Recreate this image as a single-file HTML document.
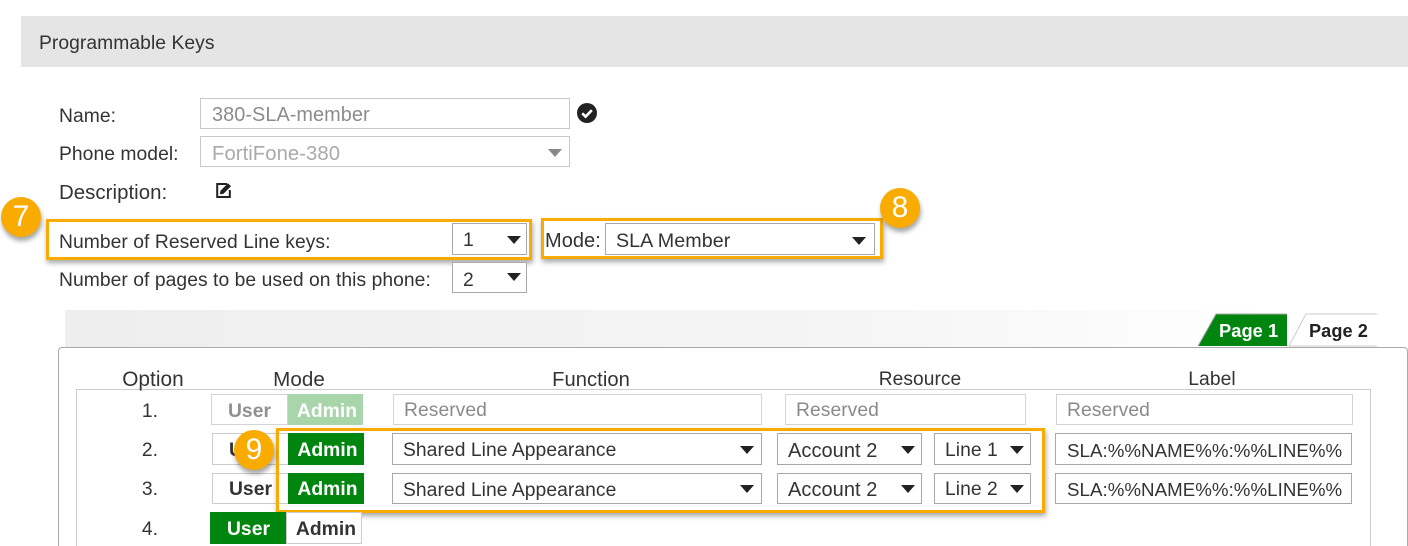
<!DOCTYPE html>
<html><head><meta charset="utf-8"><style>
html,body{margin:0;padding:0;background:#fff}
#p{position:relative;width:1408px;height:546px;overflow:hidden;background:#fff;font-family:"Liberation Sans",sans-serif;color:#333;font-size:19.3px;letter-spacing:.05px}
#p div{position:absolute;box-sizing:border-box}
.t{white-space:nowrap;height:24px;line-height:24px}
.c{text-align:center}
.b{border:1px solid #a8a8a8;background:#fff;white-space:nowrap;padding-left:10px}
.l{border:1px solid #d4d4d4;background:#fff;color:#8a8a8a;white-space:nowrap;padding-left:10px}
.a{width:0;height:0;border-left:7px solid transparent;border-right:7px solid transparent;border-top:8px solid #222}
.g{background:#00860f;color:#fff;font-weight:bold;text-align:center}
.o{border:3px solid #f9ab00;box-shadow:1px 3px 5px rgba(0,0,0,.35)}
.n{width:40px;height:40px;border-radius:50%;background:#f9ab00;color:#fff;text-align:center;font-size:30px;line-height:40px;box-shadow:1px 4px 5px rgba(0,0,0,.35)}
</style></head><body><div id="p">
<div style="left:21px;top:16px;width:1387px;height:51px;background:#e5e5e5"></div>
<div class="t" style="left:39px;top:32px">Programmable Keys</div>

<div class="t" style="left:59px;top:105px">Name:</div>
<div class="l" style="left:200px;top:98px;width:370px;height:31px;line-height:32px;border-color:#c8c8c8;color:#8c8c8c;padding-left:11px;font-size:19.9px">380-SLA-member</div>
<svg style="position:absolute;left:577px;top:103px" width="20" height="20" viewBox="0 0 20 20"><circle cx="10" cy="10" r="10" fill="#222"/><path d="M5.2 10.3l3.4 3.3 6.2-6.4" fill="none" stroke="#fff" stroke-width="2.6"/></svg>

<div class="t" style="left:59px;top:143px">Phone model:</div>
<div class="l" style="left:200px;top:136px;width:370px;height:31px;line-height:34px;border-color:#c8c8c8;color:#aaa;padding-left:11px;font-size:20.3px">FortiFone-380</div>
<div class="a" style="left:548px;top:149px;border-top-color:#888"></div>

<div class="t" style="left:59px;top:181px;font-size:20.4px">Description:</div>
<svg style="position:absolute;left:215px;top:181px" width="18" height="18" viewBox="0 0 18 18"><path d="M12 3H2.2v13h12.6V9" fill="none" stroke="#222" stroke-width="2"/><path d="M5.5 9.8L13 2.2l3 3-7.5 7.6-3.6.6z" fill="#222"/></svg>

<div class="o" style="left:46px;top:219px;width:486px;height:41px"></div>
<div class="t" style="left:59px;top:231px">Number of Reserved Line keys:</div>
<div class="b" style="left:452px;top:223px;width:75px;height:32px;line-height:34px">1</div>
<div class="a" style="left:507px;top:236px"></div>
<div class="n" style="left:1px;top:197px">7</div>

<div class="o" style="left:541px;top:218px;width:342px;height:41px"></div>
<div class="t" style="left:545px;top:229px;font-size:20px">Mode:</div>
<div class="b" style="left:605px;top:223px;width:270px;height:32px;line-height:34px;font-size:19.7px">SLA Member</div>
<div class="a" style="left:852px;top:237px"></div>
<div class="n" style="left:880px;top:188px">8</div>

<div class="t" style="left:59px;top:269px">Number of pages to be used on this phone:</div>
<div class="b" style="left:452px;top:262px;width:75px;height:31px;line-height:35px">2</div>
<div class="a" style="left:507px;top:273px"></div>

<div style="left:65px;top:310px;width:1312px;height:37px;background:linear-gradient(90deg,#eeeeee,#f5f5f5 60%,#fff 92%)"></div>
<svg style="position:absolute;left:1190px;top:310px" width="190" height="40" viewBox="0 0 190 40"><path d="M8 36L26 4h71v32z" fill="#00860f"/><path d="M8 36L26 4h71" fill="none" stroke="#aaa"/><path d="M99 37h88V4h-71z" fill="#fff"/><path d="M187 36H99L116 4h71" fill="none" stroke="#ccc"/></svg>
<div class="t" style="left:1219px;top:319px;color:#fff;font-weight:bold;font-size:18.3px">Page 1</div>
<div class="t" style="left:1309px;top:319px;font-weight:bold;color:#222;font-size:18.2px">Page 2</div>

<div style="left:58px;top:347px;width:1350px;height:210px;border:1px solid #aaa;border-radius:4px;background:#fff"></div>
<div style="left:76px;top:389px;width:1295px;height:170px;border:1px solid #ccc"></div>
<div class="t c" style="left:93px;top:368px;width:120px;font-size:20.8px">Option</div>
<div class="t c" style="left:239px;top:368px;width:120px;font-size:20.6px">Mode</div>
<div class="t c" style="left:531px;top:368px;width:120px;font-size:20.2px">Function</div>
<div class="t c" style="left:860px;top:368px;width:120px;font-size:19.2px">Resource</div>
<div class="t c" style="left:1152px;top:368px;width:120px">Label</div>

<div class="t c" style="left:130px;top:400px;width:40px">1.</div>
<div class="t c" style="left:130px;top:439px;width:40px">2.</div>
<div class="t c" style="left:130px;top:478px;width:40px">3.</div>
<div class="t c" style="left:130px;top:518px;width:40px">4.</div>

<div class="l c" style="left:211px;top:394px;width:77px;height:31px;line-height:33px;padding:0;font-weight:bold;color:#909090">User</div>
<div class="g" style="left:288px;top:394px;width:75px;height:31px;line-height:36px;background:#a8d6aa;padding-left:3px">Admin</div>
<div class="l" style="left:393px;top:394px;width:369px;height:31px;line-height:32px">Reserved</div>
<div class="l" style="left:785px;top:394px;width:241px;height:31px;line-height:32px">Reserved</div>
<div class="l" style="left:1056px;top:394px;width:297px;height:31px;line-height:32px">Reserved</div>

<div class="b" style="left:212px;top:433px;width:77px;height:32px;line-height:33px;padding:0;border-color:#ccc;text-align:center;font-weight:bold">User</div>
<div class="g" style="left:288px;top:433px;width:76px;height:32px;line-height:36px;padding-left:3px">Admin</div>
<div class="b" style="left:392px;top:433px;width:370px;height:32px;line-height:34px">Shared Line Appearance</div>
<div class="a" style="left:740px;top:446px"></div>
<div class="b" style="left:777px;top:433px;width:145px;height:32px;line-height:34px;font-size:20px">Account 2</div>
<div class="a" style="left:901px;top:446px"></div>
<div class="b" style="left:934px;top:433px;width:97px;height:32px;line-height:34px">Line 1</div>
<div class="a" style="left:1010px;top:446px"></div>
<div class="b" style="left:1055px;top:433px;width:297px;height:32px;line-height:34px;font-size:18.7px;padding-left:11px">SLA:%%NAME%%:%%LINE%%</div>

<div class="b" style="left:212px;top:473px;width:77px;height:31px;line-height:32px;padding:0;border-color:#ccc;text-align:center;font-weight:bold">User</div>
<div class="g" style="left:288px;top:473px;width:76px;height:31px;line-height:34px;padding-left:3px">Admin</div>
<div class="b" style="left:392px;top:473px;width:370px;height:31px;line-height:34px">Shared Line Appearance</div>
<div class="a" style="left:740px;top:485px"></div>
<div class="b" style="left:777px;top:473px;width:145px;height:31px;line-height:32px;font-size:20px">Account 2</div>
<div class="a" style="left:901px;top:485px"></div>
<div class="b" style="left:934px;top:473px;width:97px;height:31px;line-height:32px">Line 2</div>
<div class="a" style="left:1010px;top:485px"></div>
<div class="b" style="left:1055px;top:473px;width:297px;height:31px;line-height:32px;font-size:18.7px;padding-left:11px">SLA:%%NAME%%:%%LINE%%</div>

<div class="o" style="left:276px;top:428px;width:769px;height:85px"></div>

<div class="g" style="left:210px;top:512px;width:76px;height:32px;line-height:35px;padding-left:1px">User</div>
<div class="b" style="left:286px;top:512px;width:76px;height:32px;line-height:34px;padding:0 0 0 4px;border-color:#ccc;text-align:center;font-weight:bold">Admin</div>
<div class="n" style="left:234px;top:430px">9</div>
</div></body></html>
